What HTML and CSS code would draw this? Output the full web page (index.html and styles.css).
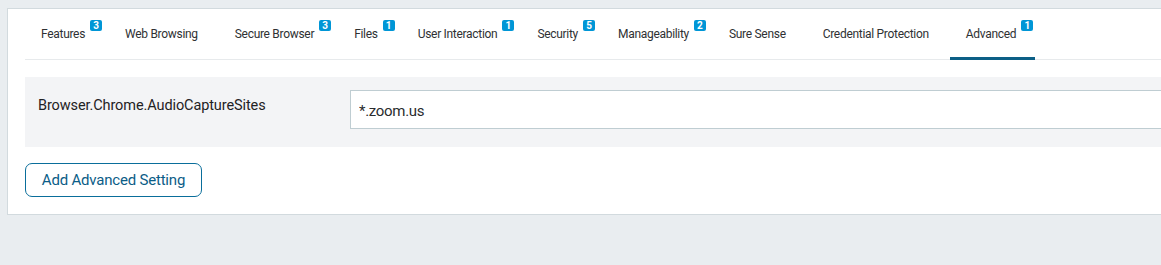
FILE: index.html
```html
<!DOCTYPE html>
<html lang="en">
<head>
<meta charset="utf-8">
<title>Advanced settings</title>
<link rel="stylesheet" href="styles.css">
</head>
<body>
<div class="card">
  <nav class="tabs">
    <a class="tab"><span class="tab-text">Features</span><span class="badge">3</span></a>
    <a class="tab"><span class="tab-text">Web Browsing</span></a>
    <a class="tab"><span class="tab-text">Secure Browser</span><span class="badge">3</span></a>
    <a class="tab"><span class="tab-text">Files</span><span class="badge">1</span></a>
    <a class="tab"><span class="tab-text">User Interaction</span><span class="badge">1</span></a>
    <a class="tab"><span class="tab-text">Security</span><span class="badge">5</span></a>
    <a class="tab"><span class="tab-text">Manageability</span><span class="badge">2</span></a>
    <a class="tab"><span class="tab-text">Sure Sense</span></a>
    <a class="tab"><span class="tab-text">Credential Protection</span></a>
    <a class="tab active"><span class="tab-text">Advanced</span><span class="badge">1</span></a>
  </nav>
  <div class="setting-row">
    <div class="setting-label">Browser.Chrome.AudioCaptureSites</div>
    <div class="setting-value"><input class="text-input" type="text" value="*.zoom.us"></div>
  </div>
  <button class="btn-outline" type="button">Add Advanced Setting</button>
</div>
</body>
</html>
```
FILE: styles.css
```css
html, body {
  margin: 0;
  padding: 0;
}
body {
  background: #e9edf0;
  font-family: Roboto, "Liberation Sans", Arial, sans-serif;
  height: 265px;
  overflow: hidden;
  padding: 8px 0 0 7px;
  box-sizing: border-box;
}
.card {
  background: #ffffff;
  border: 1px solid #d2dade;
  border-right: none;
  width: 1200px;
  padding: 0 0 17px 17px;
  box-sizing: border-box;
}
.tabs {
  display: flex;
  height: 50px;
  border-bottom: 1px solid #e7eaec;
  align-items: stretch;
}
.tab {
  display: flex;
  align-items: center;
  padding: 2px 21px 0 16px;
  height: 51px;
  box-sizing: border-box;
  margin-bottom: -1px;
  border-bottom: 3px solid transparent;
  color: #2f3133;
  font-size: 12px;
  letter-spacing: -0.3px;
  white-space: nowrap;
  cursor: pointer;
}
.tab.active {
  border-bottom-color: #0c5f86;
  padding-right: 16px;
}
.badge {
  display: inline-flex;
  align-items: center;
  justify-content: center;
  width: 12px;
  height: 11px;
  margin-left: 5px;
  margin-right: -14px;
  border-radius: 2px;
  background: #0096d6;
  color: #ffffff;
  font-size: 10px;
  font-weight: 700;
  letter-spacing: 0;
  position: relative;
  top: -9px;
}
.setting-row {
  display: grid;
  grid-template-columns: 312px 1fr;
  margin-top: 17px;
  background: #f3f4f6;
  padding: 13px 0 18px 13px;
  height: 70px;
  box-sizing: border-box;
}
.setting-label {
  font-size: 14.5px;
  color: #1f2224;
  letter-spacing: -0.1px;
  padding-top: 7px;
}
.setting-value {
  display: flex;
}
.text-input {
  width: 100%;
  height: 39px;
  box-sizing: border-box;
  border: 1px solid #bfcdd2;
  background: #ffffff;
  padding: 2px 8px 0 8px;
  font-family: Roboto, "Liberation Sans", Arial, sans-serif;
  font-size: 15px;
  color: #2a2c2e;
  letter-spacing: -0.3px;
  outline: none;
}
.btn-outline {
  display: flex;
  align-items: center;
  justify-content: center;
  margin-top: 16px;
  width: 177px;
  height: 34px;
  box-sizing: border-box;
  border: 1px solid #0a6e9b;
  border-radius: 7px;
  background: #ffffff;
  color: #0b5d87;
  font-family: Roboto, "Liberation Sans", Arial, sans-serif;
  font-size: 15px;
  letter-spacing: -0.2px;
  padding: 0;
  cursor: pointer;
}
```
